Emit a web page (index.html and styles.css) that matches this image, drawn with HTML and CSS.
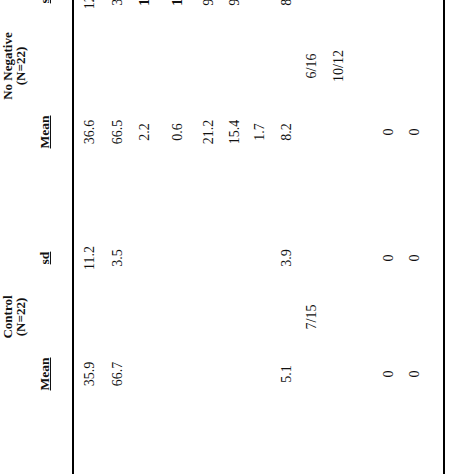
FILE: index.html
```html
<!DOCTYPE html>
<html lang="en">
<head>
<meta charset="utf-8">
<title>Table</title>
<link rel="stylesheet" href="styles.css">
</head>
<body>
<div class="page">
  <div class="sheet">
    <div class="table">
      <div class="cell"></div>
      <div class="cell group span2">Control<br>(N=22)</div>
      <div class="cell group span2">No Negative<br>(N=22)</div>

      <div class="cell"></div>
      <div class="cell sub">Mean</div>
      <div class="cell sub">sd</div>
      <div class="cell sub">Mean</div>
      <div class="cell sub">sd</div>

      <div class="rule gap"></div>

      <div class="cell"></div><div class="cell">35.9</div><div class="cell">11.2</div><div class="cell">36.6</div><div class="cell">12.1</div>
      <div class="cell"></div><div class="cell">66.7</div><div class="cell">3.5</div><div class="cell">66.5</div><div class="cell">3.8</div>
      <div class="cell"></div><div class="cell"></div><div class="cell"></div><div class="cell">2.2</div><div class="cell strong">1.8</div>
      <div class="cell"></div><div class="cell"></div><div class="cell"></div><div class="cell">0.6</div><div class="cell strong">1.2</div>
      <div class="cell"></div><div class="cell"></div><div class="cell"></div><div class="cell">21.2</div><div class="cell">9.6</div>
      <div class="cell"></div><div class="cell"></div><div class="cell"></div><div class="cell">15.4</div><div class="cell">9.9</div>
      <div class="cell"></div><div class="cell"></div><div class="cell"></div><div class="cell">1.7</div><div class="cell"></div>
      <div class="cell"></div><div class="cell">5.1</div><div class="cell">3.9</div><div class="cell">8.2</div><div class="cell">8.1</div>
      <div class="cell"></div><div class="cell span2">7/15</div><div class="cell span2">6/16</div>
      <div class="cell"></div><div class="cell span2"></div><div class="cell span2">10/12</div>
      <div class="cell"></div><div class="cell">0</div><div class="cell">0</div><div class="cell">0</div><div class="cell">0</div>
      <div class="cell"></div><div class="cell">0</div><div class="cell">0</div><div class="cell">0</div><div class="cell">0</div>

      <div class="rule"></div>
    </div>
  </div>
</div>
</body>
</html>
```
FILE: styles.css
```css
html, body {
  margin: 0;
  padding: 0;
  background: #ffffff;
}

body {
  font-family: "Liberation Serif", "Times New Roman", serif;
  color: #111111;
  overflow: hidden;
}

.page {
  width: 474px;
  height: 474px;
  overflow: hidden;
  background: #ffffff;
}

.sheet {
  width: 474px;
  height: 474px;
  transform: rotate(-90deg);
  transform-origin: 50% 50%;
}

.table {
  display: grid;
  width: 543px;
  grid-template-columns: 41px 118px 114px 138px 132px;
  grid-template-rows: 38px 34px 11px 28px 27px 33px 31px 26px 25px 27px 25px 27px 50px 26px 35px 2px;
}

.cell {
  text-align: center;
  white-space: nowrap;
  font-size: 14px;
  line-height: 14px;
}

.span2 {
  grid-column: span 2;
}

.group {
  font-weight: bold;
  font-size: 13px;
  line-height: 13px;
  padding-top: 1px;
}

.sub {
  font-weight: bold;
  font-size: 13.5px;
  line-height: 14px;
  text-decoration: underline;
  text-decoration-thickness: 1px;
}

.strong {
  font-weight: bold;
}

.rule {
  grid-column: 1 / -1;
  height: 2px;
  background: #000000;
  align-self: start;
}
```
